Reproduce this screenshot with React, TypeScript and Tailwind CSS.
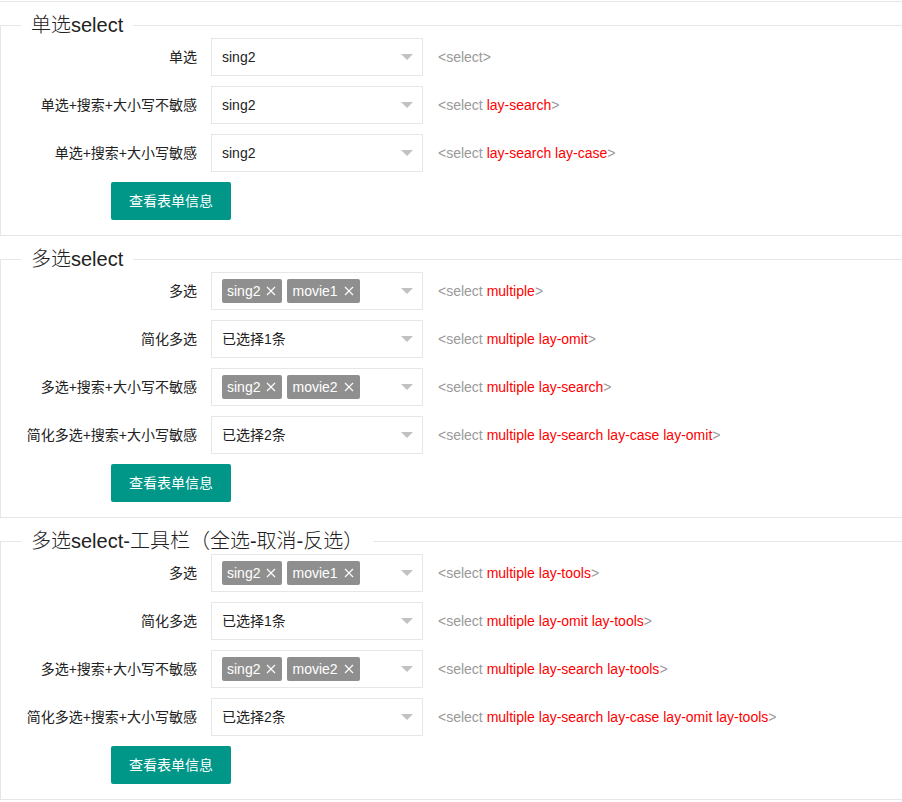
import React from "react";

type Row = {
  label: string;
  tags?: string[];
  value?: string;
  code: string;
};

const GRAY = "text-[#999]";

const Arrow = () => (
  <span className="h-0 w-0 border-x-[6px] border-t-[6px] border-x-transparent border-t-[#c2c2c2]" />
);

const Close = () => (
  <svg width="10" height="10" viewBox="0 0 10 10" className="ml-[6px]">
    <path d="M1 1 L9 9 M9 1 L1 9" stroke="#fff" strokeWidth="1.1" fill="none" />
  </svg>
);

const Code = ({ code }: { code: string }) => {
  const attrs = code.split(" ").filter(Boolean);
  return (
    <span className="ml-[15px] whitespace-nowrap text-[14px]">
      <span className={GRAY}>&lt;select</span>
      {attrs.length > 0 && <span className="text-[#f00]"> {attrs.join(" ")}</span>}
      <span className={GRAY}>&gt;</span>
    </span>
  );
};

const FormRow = ({ row }: { row: Row }) => (
  <div className="mb-[10px] flex h-[38px] items-center">
    <label className="w-[210px] shrink-0 pr-[14px] text-right text-[14px] text-[#222]">{row.label}</label>
    <div className="flex h-[38px] w-[212px] shrink-0 items-center justify-between border border-[#e6e6e6] bg-white pl-[10px] pr-[9px]">
      {row.tags ? (
        <div className="flex gap-[5px]">
          {row.tags.map((t) => (
            <span key={t} className="flex h-[24px] items-center rounded-[2px] bg-[#8f8f8f] pl-[5px] pr-[6px] text-[14px] text-white">
              {t}
              <Close />
            </span>
          ))}
        </div>
      ) : (
        <span className="text-[14px] text-[#222]">{row.value}</span>
      )}
      <Arrow />
    </div>
    <Code code={row.code} />
  </div>
);

const Section = ({ title, rows }: { title: string; rows: Row[] }) => (
  <fieldset className="mt-[11px] border border-[#e6e6e6] pb-[15px] pt-px">
    <legend className="ml-5 px-2.5 text-[20px] font-light leading-6 text-[#222]">{title}</legend>
    {rows.map((r) => (
      <FormRow key={r.label + r.code} row={r} />
    ))}
    <button className="ml-[110px] h-[38px] w-[120px] rounded-[2px] bg-[#009688] text-[14px] text-white">
      查看表单信息
    </button>
  </fieldset>
);

const single: Row[] = [
  { label: "单选", value: "sing2", code: "" },
  { label: "单选+搜索+大小写不敏感", value: "sing2", code: "lay-search" },
  { label: "单选+搜索+大小写敏感", value: "sing2", code: "lay-search lay-case" },
];

const multi: Row[] = [
  { label: "多选", tags: ["sing2", "movie1"], code: "multiple" },
  { label: "简化多选", value: "已选择1条", code: "multiple lay-omit" },
  { label: "多选+搜索+大小写不敏感", tags: ["sing2", "movie2"], code: "multiple lay-search" },
  { label: "简化多选+搜索+大小写敏感", value: "已选择2条", code: "multiple lay-search lay-case lay-omit" },
];

const tools: Row[] = multi.map((r) => ({ ...r, code: r.code + " lay-tools" }));

export default function App() {
  return (
    <div className="h-screen overflow-hidden bg-white font-['Liberation_Sans','Noto_Sans_CJK_SC',sans-serif] text-[#222]">
      <div className="w-[960px]">
        <div className="mt-px h-px bg-[#e6e6e6]" />
        <Section title="单选select" rows={single} />
        <Section title="多选select" rows={multi} />
        <Section title="多选select-工具栏（全选-取消-反选）" rows={tools} />
      </div>
    </div>
  );
}
